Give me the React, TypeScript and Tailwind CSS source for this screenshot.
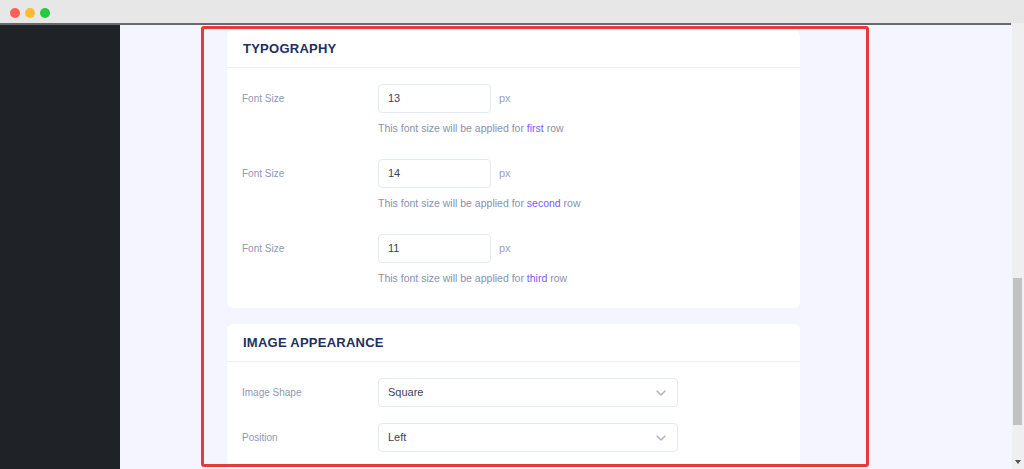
import { ChevronDown } from 'lucide-react'

const fontRows = [
  { value: '13', word: 'first' },
  { value: '14', word: 'second' },
  { value: '11', word: 'third' },
]

const selectRows = [
  { label: 'Image Shape', value: 'Square' },
  { label: 'Position', value: 'Left' },
]

function TitleBar() {
  return (
    <div className="h-[25px] shrink-0 bg-[#e7e7e7] border-b-2 border-[#67696c] flex items-center pt-[3px] pl-[10px] gap-[5px] mr-[13px]">
      <span className="w-[10px] h-[10px] rounded-full bg-[#fe5f57]" />
      <span className="w-[10px] h-[10px] rounded-full bg-[#febc2e]" />
      <span className="w-[10px] h-[10px] rounded-full bg-[#28c840]" />
    </div>
  )
}

function CardHeader({ title }: { title: string }) {
  return (
    <div className="h-[38px] border-b border-[#eef0f9] flex items-center px-[16px]">
      <h2 className="text-[13px] font-bold tracking-[0.25px] text-[#22305e]">{title}</h2>
    </div>
  )
}

export default function App() {
  return (
    <div className="w-[1024px] h-[469px] overflow-hidden flex flex-col bg-[#e7e7e7] font-['Liberation_Sans',Arial,sans-serif]">
      <TitleBar />

      <div className="flex flex-1 min-h-0">
        {/* Sidebar */}
        <div className="w-[120px] shrink-0 bg-[#1f2328]" />

        {/* Main area */}
        <div className="relative flex-1 bg-[#f4f5fe] overflow-hidden pl-[107px] pt-[5px]">
          {/* Typography card */}
          <div className="w-[573px] bg-white rounded-[6px]">
            <CardHeader title="TYPOGRAPHY" />
            <div className="px-[15px] pt-[16px] pb-[23px] flex flex-col gap-[24px]">
              {fontRows.map((row) => (
                <div key={row.word} className="flex">
                  <div className="w-[136px] h-[29px] flex items-center text-[10px] text-[#8e97b6]">
                    Font Size
                  </div>
                  <div>
                    <div className="flex items-center">
                      <div className="w-[113px] h-[29px] border border-[#e4e9f7] rounded-[4px] flex items-center px-[9px] text-[11px] text-[#3d3f62]">
                        {row.value}
                      </div>
                      <span className="ml-[8px] text-[11px] text-[#9ba2bd]">px</span>
                    </div>
                    <p className="mt-[8px] leading-[14px] text-[10.5px] text-[#8891b0]">
                      This font size will be applied for <span className="text-[#7a5af8]">{row.word}</span> row
                    </p>
                  </div>
                </div>
              ))}
            </div>
          </div>

          {/* Image appearance card */}
          <div className="w-[573px] mt-[16px] bg-white rounded-[6px]">
            <CardHeader title="IMAGE APPEARANCE" />
            <div className="px-[15px] pt-[16px] pb-[20px] flex flex-col gap-[16px]">
              {selectRows.map((row) => (
                <div key={row.label} className="flex">
                  <div className="w-[136px] h-[29px] flex items-center text-[10px] text-[#8e97b6]">
                    {row.label}
                  </div>
                  <div className="w-[300px] h-[29px] border border-[#e4e9f7] rounded-[4px] flex items-center justify-between pl-[9px] pr-[8px] text-[11px] text-[#3d3f62]">
                    <span>{row.value}</span>
                    <ChevronDown size={16} strokeWidth={2} className="text-[#a7afc9]" />
                  </div>
                </div>
              ))}
            </div>
          </div>

          {/* Highlight annotation */}
          <div className="absolute left-[81px] top-[1px] w-[668px] h-[441px] border-[3px] border-[#e8393c] rounded-[3px]" />
        </div>

        {/* Scrollbar */}
        <div className="relative w-[12px] shrink-0 bg-[#efefef] -mt-[2px]">
          <div className="absolute left-[1px] top-[255px] w-[9px] h-[147px] bg-[#c1c1c1]" />
          <div className="absolute left-[3px] bottom-[5px] w-0 h-0 border-l-[3px] border-r-[3px] border-t-[4px] border-l-transparent border-r-transparent border-t-[#505050]" />
        </div>
      </div>
    </div>
  )
}
